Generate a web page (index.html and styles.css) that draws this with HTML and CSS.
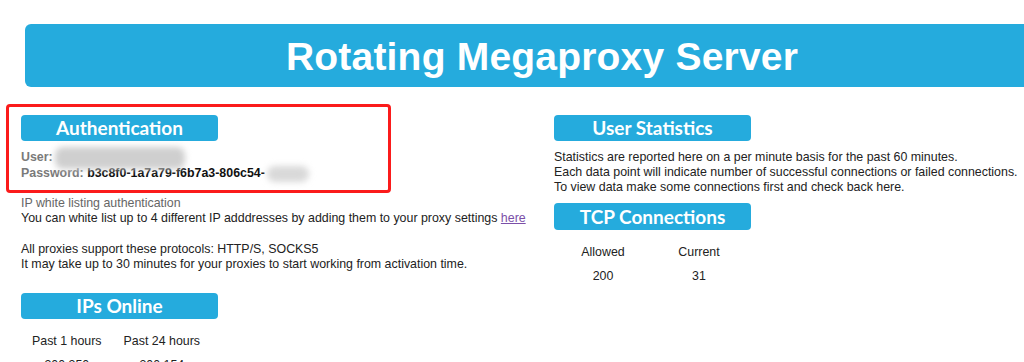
FILE: index.html
```html
<!DOCTYPE html>
<html>
<head>
<meta charset="utf-8">
<link rel="stylesheet" href="styles.css">
</head>
<body>
<div class="header"><h1>Rotating Megaproxy Server</h1></div>
<div class="columns">
  <div class="col">
    <section class="auth">
      <div class="pill">Authentication</div>
      <div class="cred-line"><span class="label">User:</span><span class="blur blur-user"></span></div>
      <div class="cred-line"><span class="label">Password:</span> <b class="value">b3c8f0-1a7a79-f6b7a3-806c54-</b><span class="blur blur-pass"></span></div>
    </section>
    <p class="text"><span class="muted">IP white listing authentication</span><br>You can white list up to 4 different IP adddresses by adding them to your proxy settings <a href="#">here</a></p>
    <p class="text">All proxies support these protocols: HTTP/S, SOCKS5<br>It may take up to 30 minutes for your proxies to start working from activation time.</p>
    <div class="pill pill-ips">IPs Online</div>
    <table class="stats stats-ips">
      <tr><th>Past 1 hours</th><th>Past 24 hours</th></tr>
      <tr><td>300,350</td><td>300,154</td></tr>
    </table>
  </div>
  <div class="col">
    <div class="pill">User Statistics</div>
    <p class="text stats-text">Statistics are reported here on a per minute basis for the past 60 minutes.<br>Each data point will indicate number of successful connections or failed connections.<br>To view data make some connections first and check back here.</p>
    <div class="pill pill-tcp">TCP Connections</div>
    <table class="stats stats-tcp">
      <tr><th>Allowed</th><th>Current</th></tr>
      <tr><td>200</td><td>31</td></tr>
    </table>
  </div>
</div>
</body>
</html>
```
FILE: styles.css
```css
html, body {
  margin: 0;
  padding: 0;
  background: #ffffff;
  overflow: hidden;
}
body {
  font-family: "Liberation Sans", Arial, sans-serif;
  font-size: 12.4px;
  color: #222;
  width: 1024px;
  height: 362px;
}
.header {
  margin: 24px 0 0 25px;
  width: 1034px;
  height: 63px;
  background: #25abdd;
  border-radius: 6px;
  display: flex;
  align-items: center;
  justify-content: center;
}
.header h1 {
  margin: 2px 0 0 0;
  color: #fff;
  font-family: "Liberation Sans", Arial, sans-serif;
  font-weight: bold;
  font-size: 39px;
  letter-spacing: 0.2px;
}
.columns {
  display: grid;
  grid-template-columns: 533px 1fr;
  padding-left: 21px;
  margin-top: 28px;
}
.pill {
  width: 197px;
  height: 26px;
  background: #25abdd;
  border-radius: 4px;
  color: #fff;
  font-family: Lato, "Open Sans", sans-serif;
  font-weight: bold;
  font-size: 19px;
  line-height: 26px;
  text-align: center;
}
.auth {
  position: relative;
  width: 345px;
}
.auth::after {
  content: "";
  position: absolute;
  left: -15px;
  top: -11px;
  right: -25px;
  bottom: -12px;
  border: 3px solid #fb1b1b;
  border-radius: 4px;
}
.cred-line {
  line-height: 16px;
  color: #777;
  white-space: nowrap;
}
.auth .pill {
  margin-bottom: 8px;
}
.label {
  color: #7a7a7a;
  font-weight: bold;
}
.value {
  color: #111;
}
.blur {
  display: inline-block;
  vertical-align: middle;
  background: #cfcfcf;
  filter: blur(3px);
  border-radius: 8px;
}
.blur-user {
  width: 130px;
  height: 22px;
  margin: -8px 0 -8px 2px;
}
.blur-pass {
  width: 42px;
  height: 16px;
  margin: -6px 0 -6px 2px;
  background: #d9d9d9;
}
.text {
  margin: 0;
  line-height: 15px;
}
.col > .auth + .text {
  margin-top: 15px;
}
.col > .text + .text {
  margin-top: 16px;
}
.muted {
  color: #666;
}
a {
  color: #7b4fa8;
}
.pill-ips {
  margin-top: 21px;
}
.stats-text {
  margin-top: 9px;
  color: #222;
}
.pill-tcp {
  margin-top: 8px;
  height: 27px;
  line-height: 27px;
}
.stats {
  border-collapse: collapse;
  margin-top: 10px;
}
.stats th, .stats td {
  font-weight: normal;
  padding: 0;
  text-align: center;
  height: 24px;
  color: #222;
}
.stats-tcp th, .stats-tcp td {
  width: 96px;
}
.stats-tcp {
  margin-left: 1px;
}
.stats-ips th, .stats-ips td {
  padding: 0 11px;
}
```
